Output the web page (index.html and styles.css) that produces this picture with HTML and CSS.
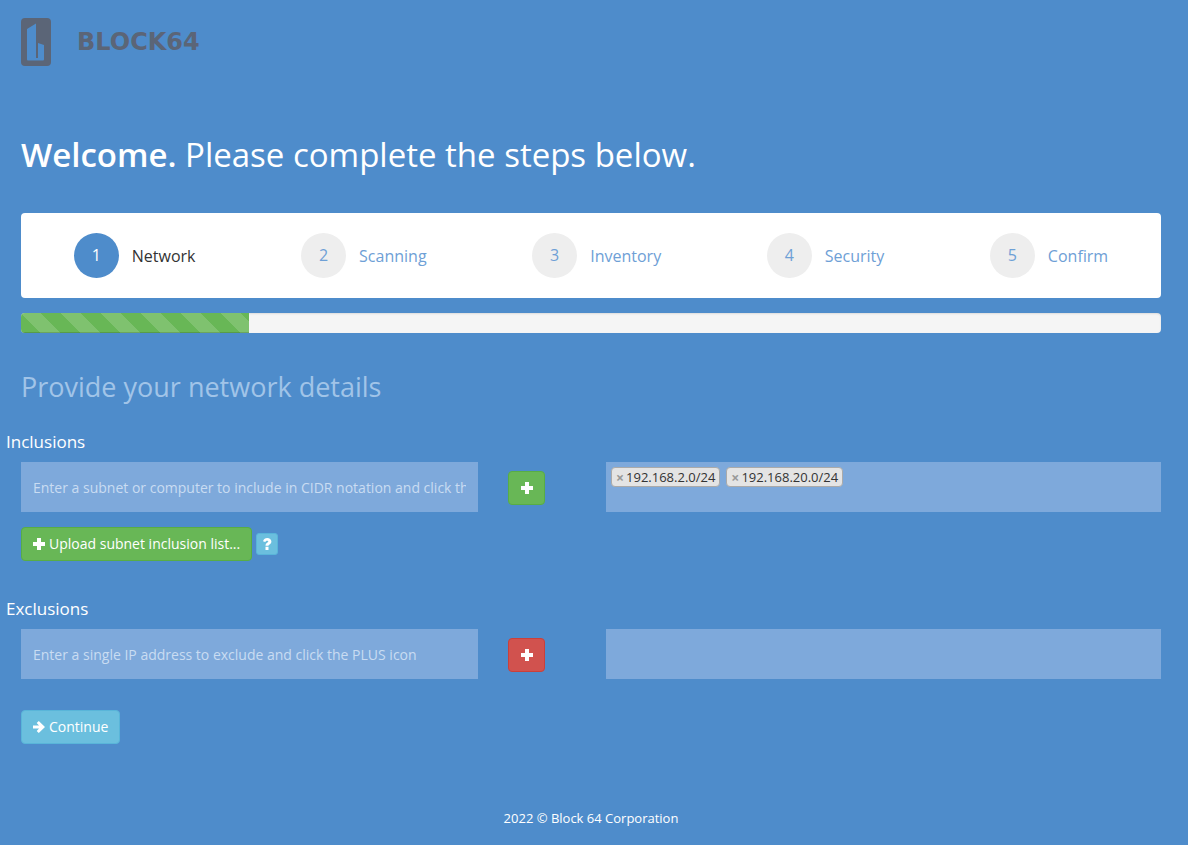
FILE: index.html
```html
<!DOCTYPE html>
<html lang="en">
    <head>
        <meta charset="utf-8">
        <title>Block 64 - Setup</title>
        <link rel="stylesheet" href="styles.css">
    </head>
    <body>
        <header class="logo">
            <svg class="logo-mark" viewBox="0 0 30 48" aria-hidden="true">
                <path fill-rule="evenodd" d="M4 0h22a4 4 0 0 1 4 4v40a4 4 0 0 1-4 4H4a4 4 0 0 1-4-4V4a4 4 0 0 1 4-4zM6 11v30.500q0 1 1 1h15q1 0 1-1V27l-6-2v15h-2V5.500z"/>
            </svg>
            <span class="logo-text">BLOCK64</span>
        </header>

        <main>
            <h1><strong>Welcome.</strong> Please complete the steps below.</h1>

            <nav class="steps">
                <a href="#network" class="step active"><span class="number">1</span>Network</a>
                <a href="#scanning" class="step"><span class="number">2</span>Scanning</a>
                <a href="#inventory" class="step"><span class="number">3</span>Inventory</a>
                <a href="#security" class="step"><span class="number">4</span>Security</a>
                <a href="#confirm" class="step"><span class="number">5</span>Confirm</a>
            </nav>

            <div class="progress">
                <div class="progress-bar" style="width: 20%"></div>
            </div>

            <h2>Provide your network details</h2>

            <form>
                <label class="group-label" for="include">Inclusions</label>
                <div class="row">
                    <input type="text" id="include" class="field" placeholder="Enter a subnet or computer to include in CIDR notation and click the PLUS icon">
                    <div class="add">
                        <button type="button" class="btn green" aria-label="Add inclusion">
                            <svg class="icon" viewBox="0 0 12 12"><path d="M4 0h4v4h4v4H8v4H4V8H0V4h4z"/></svg>
                        </button>
                    </div>
                    <ul class="tags">
                        <li class="tag"><button type="button" class="remove" aria-label="Remove 192.168.2.0/24">×</button>192.168.2.0/24</li>
                        <li class="tag"><button type="button" class="remove" aria-label="Remove 192.168.20.0/24">×</button>192.168.20.0/24</li>
                    </ul>
                </div>
                <div class="upload">
                    <button type="button" class="btn green">
                        <svg class="icon" viewBox="0 0 12 12"><path d="M4 0h4v4h4v4H8v4H4V8H0V4h4z"/></svg>
                        Upload subnet inclusion list...
                    </button>
                    <button type="button" class="btn blue small" aria-label="Help">
                        <svg class="icon" viewBox="0 0 12 12"><path d="M4.500 8.700h3V12h-3zM2 3.200C2.800 1 4.200 0 6.200 0 8.600 0 10.400 1.500 10.400 3.600c0 1.500-.8 2.300-1.800 2.900-.7.400-1.100.7-1.100 1.300h-3c0-1.600.6-2.400 1.700-3 .8-.5 1.100-.7 1.100-1.200 0-.6-.5-.9-1.200-.9-.8 0-1.300.5-1.900 1.400z"/></svg>
                    </button>
                </div>

                <label class="group-label" for="exclude">Exclusions</label>
                <div class="row">
                    <input type="text" id="exclude" class="field" placeholder="Enter a single IP address to exclude and click the PLUS icon">
                    <div class="add">
                        <button type="button" class="btn red" aria-label="Add exclusion">
                            <svg class="icon" viewBox="0 0 12 12"><path d="M4 0h4v4h4v4H8v4H4V8H0V4h4z"/></svg>
                        </button>
                    </div>
                    <ul class="tags"></ul>
                </div>

                <button type="button" class="btn blue continue">
                    <svg class="icon" viewBox="0 0 12 12"><path d="M0 4.500h6L3.700 2.100 5.800 0l6.200 6-6.200 6-2.100-2.100L6 7.500H0z"/></svg>
                    Continue
                </button>
            </form>
        </main>

        <footer>2022 © Block 64 Corporation</footer>
    </body>
</html>
```

FILE: styles.css
```css
* {
    box-sizing: border-box;
}
body {
    margin: 0;
    padding: 18px 27px 16px 21px;
    background-color: #4e8ccb;
    color: #fff;
    font-family: "Open Sans", sans-serif;
    font-size: 14px;
    line-height: 20px;
}
.logo {
    display: flex;
    align-items: center;
    gap: 26px;
    color: #5b6577;
}
.logo-mark {
    width: 30px;
    height: 48px;
    fill: #5b6577;
}
.logo-text {
    font-family: "DejaVu Sans", sans-serif;
    font-size: 24px;
    font-weight: bold;
}
h1 {
    margin: 66px 0 35px;
    font-size: 33px;
    line-height: 46px;
    font-weight: 400;
}
h1 strong {
    font-weight: 600;
}
h2 {
    margin: 34px 0 23px;
    color: #a1c4e8;
    font-size: 27px;
    line-height: 40px;
    font-weight: 400;
}

/* wizard steps */
.steps {
    display: flex;
    justify-content: space-around;
    padding: 20px 0;
    background-color: #fff;
    border-radius: 4px;
}
.step {
    display: flex;
    align-items: center;
    gap: 13px;
    color: #6ea0d6;
    font-size: 16px;
    text-decoration: none;
}
.step .number {
    width: 45px;
    height: 45px;
    border-radius: 50%;
    background-color: #eee;
    line-height: 45px;
    text-align: center;
}
.step.active {
    color: #333;
}
.step.active .number {
    background-color: #4e8ccb;
    color: #fff;
}

.progress {
    height: 20px;
    margin-top: 15px;
    overflow: hidden;
    background-color: #f5f5f5;
    border-radius: 4px;
    box-shadow: inset 0 1px 2px rgba(0,0,0,0.1);
}
.progress-bar {
    height: 100%;
    background-color: #68b756;
    background-image: linear-gradient(45deg, rgba(255,255,255,.15) 25%, transparent 25%, transparent 50%, rgba(255,255,255,.15) 50%, rgba(255,255,255,.15) 75%, transparent 75%, transparent);
    background-size: 40px 40px;
    box-shadow: inset 0 -1px 0 rgba(0,0,0,0.15);
}

/* network form */
.group-label {
    display: block;
    margin: 0 0 8px -15px;
    font-size: 17px;
    line-height: 24px;
}
.row {
    display: grid;
    grid-template-columns: 457fr 128fr 555fr;
}
.field {
    width: 100%;
    height: 50px;
    padding: 0 12px;
    border: 0;
    border-radius: 0;
    background-color: #7ea9db;
    color: #fff;
    font: inherit;
}
.field::placeholder {
    color: #c9dcf2;
    opacity: 1;
}
.add {
    padding: 9px 30px 0;
}
.btn {
    display: inline-flex;
    align-items: center;
    gap: 4px;
    height: 34px;
    padding: 0 11px;
    border: 1px solid;
    border-radius: 4px;
    color: #fff;
    font: inherit;
    cursor: pointer;
}
.add .btn {
    justify-content: center;
    width: 37px;
}
.green {
    background-color: #68b756;
    border-color: #58ad45;
}
.red {
    background-color: #d1524e;
    border-color: #c9403b;
}
.blue {
    background-color: #6bbfde;
    border-color: #59b5d9;
}
.btn.small {
    height: 22px;
    padding: 0 4px;
    border-radius: 3px;
}
.icon {
    flex: none;
    width: 12px;
    height: 12px;
    fill: currentColor;
}
.tags {
    display: flex;
    flex-wrap: wrap;
    align-content: flex-start;
    gap: 6px;
    min-height: 50px;
    margin: 0;
    padding: 5px;
    background-color: #7ea9db;
    list-style: none;
}
.tag {
    display: flex;
    align-items: center;
    height: 20px;
    padding: 0 4px;
    border: 1px solid #aaa;
    border-radius: 4px;
    background-color: #e4e4e4;
    color: #333;
    font-size: 13px;
}
.remove {
    margin: 0 2px 0 0;
    padding: 0;
    border: 0;
    background: none;
    color: #999;
    font-family: inherit;
    font-size: 14px;
    font-weight: bold;
    cursor: pointer;
}
.upload {
    display: flex;
    align-items: center;
    gap: 4px;
    margin: 15px 0 36px;
}
.continue {
    margin-top: 31px;
}
footer {
    margin-top: 64px;
    font-size: 13px;
    text-align: center;
}
```
